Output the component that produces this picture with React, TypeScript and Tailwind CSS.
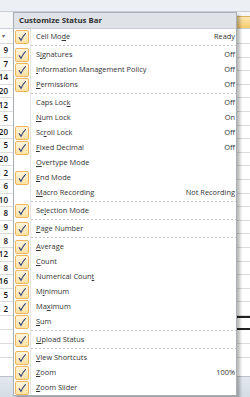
type Entry = { label: string; u: number; on?: boolean; value?: string } | 'sep';

const entries: Entry[] = [
  { label: 'Cell Mode', u: 7, on: true, value: 'Ready' },
  'sep',
  { label: 'Signatures', u: 1, on: true, value: 'Off' },
  { label: 'Information Management Policy', u: 0, on: true, value: 'Off' },
  { label: 'Permissions', u: 0, on: true, value: 'Off' },
  'sep',
  { label: 'Caps Lock', u: 8, value: 'Off' },
  { label: 'Num Lock', u: 0, value: 'On' },
  { label: 'Scroll Lock', u: 2, on: true, value: 'Off' },
  { label: 'Fixed Decimal', u: 0, on: true, value: 'Off' },
  { label: 'Overtype Mode', u: 0 },
  { label: 'End Mode', u: 0, on: true },
  { label: 'Macro Recording', u: 0, value: 'Not Recording' },
  'sep',
  { label: 'Selection Mode', u: 2, on: true },
  'sep',
  { label: 'Page Number', u: 0, on: true },
  'sep',
  { label: 'Average', u: 0, on: true },
  { label: 'Count', u: 0, on: true },
  { label: 'Numerical Count', u: 14, on: true },
  { label: 'Minimum', u: 1, on: true },
  { label: 'Maximum', u: 2, on: true },
  { label: 'Sum', u: 0, on: true },
  'sep',
  { label: 'Upload Status', u: 0, on: true },
  'sep',
  { label: 'View Shortcuts', u: 0, on: true },
  { label: 'Zoom', u: 0, on: true, value: '100%' },
  { label: 'Zoom Slider', u: 0, on: true },
];

const cells = [9, 7, 14, 20, 12, 5, 20, 5, 20, 2, 6, 10, 8, 9, 8, 12, 8, 16, 5, 2];

function Check() {
  return (
    <div className="flex h-[14px] w-[14px] items-center justify-center rounded-[2px] border border-[#f0b459] bg-gradient-to-b from-[#fff5dc] to-[#fde2a2]">
      <svg width="10" height="10" viewBox="0 0 10 10">
        <path d="M2.2 5.6 L4 8.3 Q6 4 8.4 1.6" fill="none" stroke="#2f3f7e" strokeWidth="1.1" strokeLinecap="round" />
      </svg>
    </div>
  );
}

function Label({ text, u }: { text: string; u: number }) {
  return (
    <span>
      {text.slice(0, u)}
      <span className="underline decoration-[0.5px] underline-offset-[1px]">{text[u]}</span>
      {text.slice(u + 1)}
    </span>
  );
}

export default function App() {
  return (
    <div className="relative h-[397px] w-[250px] overflow-hidden bg-white font-['Open_Sans',sans-serif]">
      {/* sheet behind the menu */}
      <div className="flex h-full flex-col">
        <div className="h-[12px] shrink-0 border-b border-[#c9ced6] bg-[#eceff3]" />
        <div className="flex h-[17px] shrink-0 border-b border-[#c9ced6] bg-[#f4f6f8]">
          <div className="flex-1" />
          <div className="mt-[4px] w-[13px] border-t border-[#e0b15a] bg-gradient-to-b from-[#fde7b4] to-[#f6cb68]" />
        </div>
        <div className="flex h-[15px] shrink-0 border-b border-[#dadcdd]">
          <div className="flex w-[13px] items-center justify-start pl-[2px] text-[6px] leading-none text-[#666]">
            ▾
          </div>
        </div>
        {cells.map((n, i) => (
          <div key={i} className="flex h-[13.6px] shrink-0 border-b border-[#dadcdd]">
            <div className="flex w-[13px] items-center justify-end pr-[5px] text-[8px] leading-none font-semibold text-[#111]">
              {n}
            </div>
            <div className="flex-1" />
          </div>
        ))}
        <div className="flex h-[14px] shrink-0">
          <div className="flex-1 border-b border-[#dadcdd]" />
          <div className="w-[13px] border-y-2 border-[#222]" />
        </div>
        <div className="h-[14px] shrink-0 border-b border-[#dadcdd]" />
        <div className="h-[14px] shrink-0 border-b border-[#dadcdd]" />
        <div className="flex-1" />
        <div className="h-[21px] shrink-0 border-t border-[#b8c0ca] bg-gradient-to-b from-[#e3e8ee] to-[#d5dce4]" />
      </div>

      {/* customize status bar menu */}
      <div className="absolute top-[12px] left-[13px] w-[224px] border border-[#a9aeb4] bg-white text-[7.4px] text-[#333] shadow-[3px_3px_3px_rgba(0,0,0,0.28)]">
        <div className="flex h-[16px] items-center border-b border-[#c8cdd3] bg-[#dfe3e8] pl-[5px] text-[7.8px] font-bold text-[#2e2e2e]">
          Customize Status Bar
        </div>
        {entries.map((e, i) =>
          e === 'sep' ? (
            <div key={i} className="flex h-[3px]">
              <div className="w-[17px] shrink-0 border-r border-[#e4e4e4]" />
              <div className="flex flex-1 items-center">
                <div className="h-px w-full bg-[linear-gradient(to_right,#c6c6c6_50%,transparent_50%)] bg-[length:4px_1px]" />
              </div>
            </div>
          ) : (
            <div key={i} className="flex h-[15px]">
              <div className="flex w-[17px] shrink-0 items-center border-r border-[#e4e4e4] pl-[1px]">
                {e.on && <Check />}
              </div>
              <div className="flex flex-1 items-center justify-between pr-[1px] pl-[5px]">
                <Label text={e.label} u={e.u} />
                {e.value && <span>{e.value}</span>}
              </div>
            </div>
          ),
        )}
      </div>
    </div>
  );
}
